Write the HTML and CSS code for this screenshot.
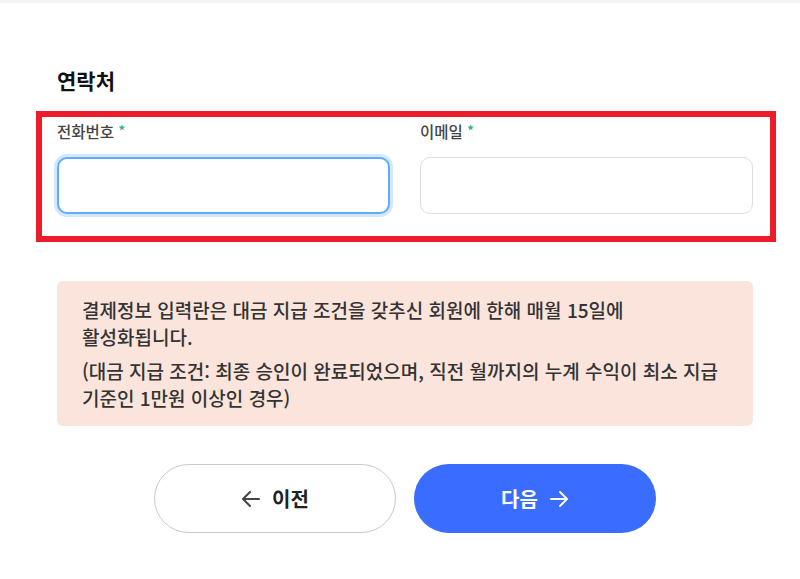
FILE: index.html
```html
<!DOCTYPE html>
<html lang="ko">
<head>
    <meta charset="UTF-8">
    <meta name="viewport" content="width=device-width, initial-scale=1.0">
    <title>연락처</title>
    <link rel="stylesheet" href="styles.css">
</head>
<body>
    <div class="top-bar"></div>

    <div class="form-wrap">
        <h2 class="section-title">연락처</h2>

        <div class="contact-box">
            <div class="field">
                <label class="field-label" for="phone">전화번호 <span class="req">*</span></label>
                <input type="text" id="phone" class="field-input is-focused">
            </div>
            <div class="field">
                <label class="field-label" for="email">이메일 <span class="req">*</span></label>
                <input type="text" id="email" class="field-input">
            </div>
        </div>

        <div class="notice">
            <p>결제정보 입력란은 대금 지급 조건을 갖추신 회원에 한해 매월 15일에 활성화됩니다.</p>
            <p>(대금 지급 조건: 최종 승인이 완료되었으며, 직전 월까지의 누계 수익이 최소 지급 기준인 1만원 이상인 경우)</p>
        </div>

        <div class="btn-row">
            <button class="btn btn-prev">
                <svg width="20" height="18" viewBox="0 0 20 18" fill="none" stroke="#444" stroke-width="2" stroke-linecap="round" stroke-linejoin="round"><path d="M18 9H3M9 2L2 9l7 7"/></svg>
                이전
            </button>
            <button class="btn btn-next">
                다음
                <svg width="20" height="18" viewBox="0 0 20 18" fill="none" stroke="#fff" stroke-width="2" stroke-linecap="round" stroke-linejoin="round"><path d="M2 9h15M11 2l7 7-7 7"/></svg>
            </button>
        </div>
    </div>
</body>
</html>
```

FILE: styles.css
```css
body {
    margin: 0;
    padding: 0;
    background-color: #fff;
    font-family: "Noto Sans CJK KR", "Noto Sans", sans-serif;
    color: #333;
}

.top-bar {
    height: 3px;
    background-color: #f4f4f4;
}

.form-wrap {
    width: 696px;
    margin-left: 57px;
    padding-top: 63px;
}

.section-title {
    margin: 0;
    font-size: 21px;
    line-height: 28px;
    font-weight: 700;
    color: #111;
}

/* 빨간 테두리 박스 */
.contact-box {
    box-sizing: border-box;
    width: 740px;
    margin: 17px 0 0 -21px;
    padding: 2px 17px 22px 15px;
    border: 6px solid #ec1c2a;
    display: grid;
    grid-template-columns: 1fr 1fr;
    gap: 30px;
}

.field {
    display: flex;
    flex-direction: column;
}

.field-label {
    font-size: 15.5px;
    line-height: 22px;
    color: #444;
    font-weight: 500;
    margin-bottom: 15px;
}

.req {
    color: #2fb57a;
    font-size: 13px;
    font-weight: 700;
    vertical-align: 3px;
}

.field-input {
    box-sizing: border-box;
    height: 57px;
    border: 1px solid #dedede;
    border-radius: 10px;
    background: #fff;
    outline: none;
    padding: 0 16px;
    font-size: 16px;
}

.field-input.is-focused {
    border: 2px solid #5fabff;
    box-shadow: 0 0 0 3px rgba(110, 180, 255, 0.3);
}

.notice {
    margin-top: 39px;
    padding: 15px 30px 15px 25px;
    background-color: #fbe4db;
    border-radius: 6px;
    font-size: 19px;
    font-weight: 500;
    line-height: 27px;
    word-break: keep-all;
    color: #333;
}

.notice p {
    margin: 0;
}

.notice p + p {
    margin-top: 7px;
}

.btn-row {
    margin-top: 38px;
    display: flex;
    justify-content: center;
    gap: 18px;
}

.btn {
    box-sizing: border-box;
    width: 242px;
    height: 69px;
    border-radius: 35px;
    font-family: inherit;
    font-size: 20px;
    font-weight: 700;
    display: flex;
    align-items: center;
    justify-content: center;
    gap: 11px;
    cursor: pointer;
}

.btn-prev {
    background: #fff;
    border: 1.5px solid #c9c9c9;
    color: #222;
}

.btn-next {
    background: #3a6cff;
    border: none;
    color: #fff;
}
```
